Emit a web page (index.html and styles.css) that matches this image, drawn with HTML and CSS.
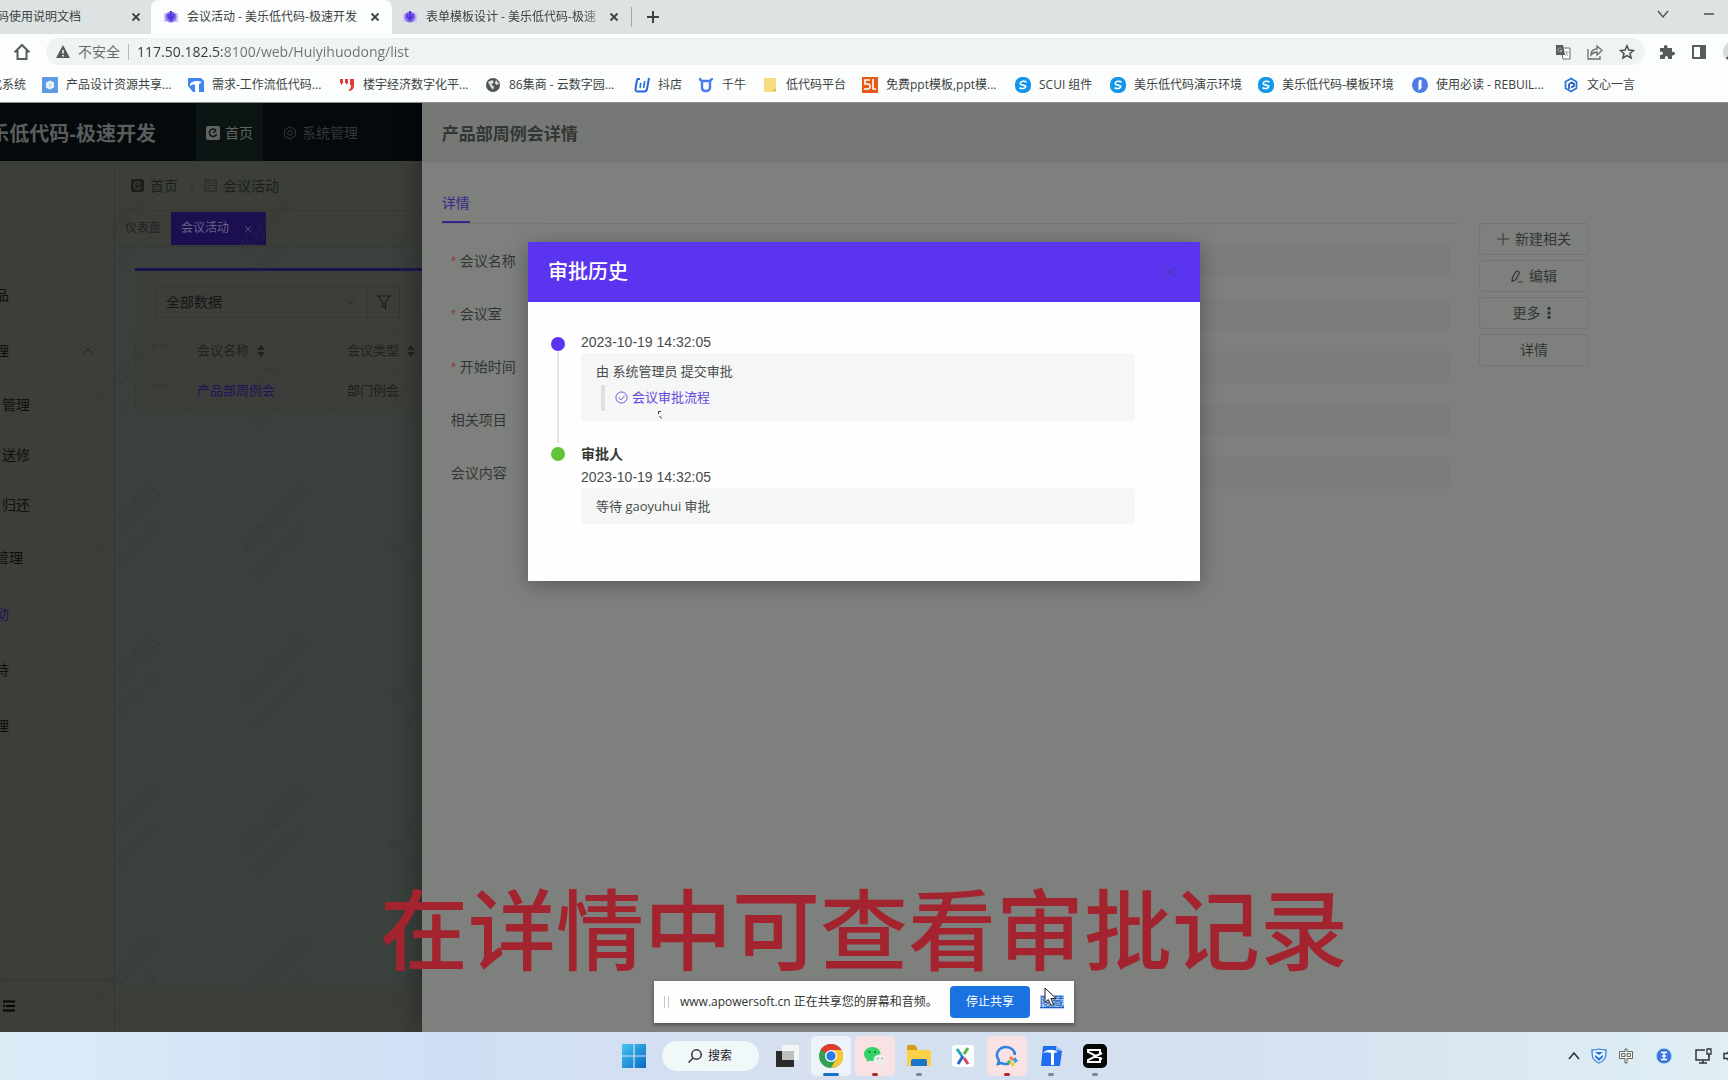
FILE: index.html
```html
<!DOCTYPE html>
<html lang="zh-CN">
<head>
<meta charset="utf-8">
<title>会议活动 - 美乐低代码-极速开发</title>
<link rel="stylesheet" href="styles.css">
</head>
<body>
<svg class="defs" aria-hidden="true">
  <defs>
    <symbol id="i-close" viewBox="0 0 10 10"><path d="M1.500 1.500l7 7M8.500 1.500l-7 7" fill="none" stroke="currentColor" stroke-width="1.800"/></symbol>
    <symbol id="i-bloom" viewBox="0 0 16 16"><path d="M1 4h3v9H1zM12 4h3v9h-3z" fill="#cdc5f8"/><circle cx="8" cy="8" r="5.500" fill="#8a70ee"/><path d="M8 2v8M5.500 5v3l2.500 3 2.500-3V5" stroke="#5635d8" stroke-width="2" fill="none"/></symbol>
    <symbol id="i-scui" viewBox="0 0 16 16"><rect width="16" height="16" rx="7" fill="#1296e8"/><path d="M11.500 5.200C9 3.200 5.500 4.500 5.200 6.500c0 2 5.600 1.200 5.600 3.200-.3 1.800-3.700 2.600-6.300 1" fill="none" stroke="#fff" stroke-width="1.600"/></symbol>
    <symbol id="i-dash" viewBox="0 0 14 14"><rect width="14" height="14" rx="2" fill="currentColor"/><path d="M10 4.500A3.700 3.700 0 1 0 10.600 8M7 7l3-2.500" fill="none" stroke="var(--hole)" stroke-width="1.500"/></symbol>
    <symbol id="i-sort" viewBox="0 0 10 12"><path d="M5 0l4 5H1zM5 12L1 7h8z" fill="currentColor"/></symbol>
  </defs>
</svg>

<header class="browser">
  <div class="tabs">
    <div class="tab tab-first"><span>低代码使用说明文档</span><button class="x" aria-label="关闭"><svg><use href="#i-close"/></svg></button></div>
    <div class="tab tab-on"><svg class="fav"><use href="#i-bloom"/></svg><span>会议活动 - 美乐低代码-极速开发</span><button class="x" aria-label="关闭"><svg><use href="#i-close"/></svg></button></div>
    <div class="tab tab-last"><svg class="fav"><use href="#i-bloom"/></svg><span class="fade">表单模板设计 - 美乐低代码-极速</span><button class="x" aria-label="关闭"><svg><use href="#i-close"/></svg></button></div>
    <button class="new" aria-label="新标签页"><svg viewBox="0 0 12 12"><path d="M6 0v12M0 6h12" stroke="#3c4443" stroke-width="2"/></svg></button>
    <div class="win">
      <svg width="12" height="12" viewBox="0 0 12 12"><path d="M1 3l5 6 5-6" fill="none" stroke="#4a504f" stroke-width="1.300"/></svg>
      <svg width="12" height="12" viewBox="0 0 12 12"><path d="M1 6h10" stroke="#333" stroke-width="1.300"/></svg>
    </div>
  </div>
  <div class="toolbar">
    <button class="tool" aria-label="主页"><svg width="16" height="18" viewBox="0 0 16 18"><path d="M1.500 8.500L8 2l6.500 6.500H12.500V16h-9V8.500z" fill="none" stroke="#555c5a" stroke-width="2"/></svg></button>
    <div class="omni">
      <svg width="14" height="14" viewBox="0 0 14 14"><path d="M7 0l7 13H0z" fill="#555c5a"/><path d="M7 5v3.500M7 10v1.500" stroke="#fff" stroke-width="1.500"/></svg>
      <span class="unsafe">不安全</span>
      <input class="url" aria-label="地址栏" value="117.50.182.5:8100/web/Huiyihuodong/list">
      <svg width="16" height="16" viewBox="0 0 16 16"><path d="M6 4h9v11H8z" fill="#fff" stroke="#666e6c"/><path d="M1 1h7l2 10H1z" fill="#555c5a"/><path d="M6.500 4.500a2 2 0 1 0 .5 2H5M10 8h4M12 7v1c0 2-1 3-2 4M11 9l2 3" fill="none" stroke="#aab0ae"/></svg>
      <svg width="16" height="16" viewBox="0 0 16 16"><path d="M1 5v10h12v-3" fill="none" stroke="#666e6c" stroke-width="1.300"/><path d="M4 11c0-4 2-6 6-6V2l5 4.500-5 4.500V8C7 8 5.500 9 4 11z" fill="none" stroke="#666e6c" stroke-width="1.300"/></svg>
      <svg width="16" height="16" viewBox="0 0 16 16"><path d="M8 1.800l1.900 4.300 4.600.4-3.500 3 1.100 4.500L8 11.600 3.900 14 5 9.500l-3.500-3 4.600-.4z" fill="none" stroke="#4a504f" stroke-width="1.500"/></svg>
    </div>
    <div class="ext">
      <svg width="16" height="16" viewBox="0 0 16 16"><path d="M1 4h4c-1-4 4-4 3.500 0H13v4c4-1 4 4 0 3.500V15H9c.5-4-3.500-4-3 0H1v-4c4 .5 4-4 0-3z" fill="#555c5a"/></svg>
      <svg width="14" height="14" viewBox="0 0 14 14"><path d="M1 1h12v12H1z" fill="none" stroke="#555c5a" stroke-width="2"/><path d="M8 1h5v12H8z" fill="#555c5a"/></svg>
      <svg width="22" height="22" viewBox="0 0 22 22"><circle cx="11" cy="11" r="11" fill="#d5dcda"/><circle cx="11" cy="8" r="4" fill="#444"/><path d="M3 18c2-6 14-6 16 0z" fill="#444"/></svg>
    </div>
  </div>
  <nav class="marks" aria-label="书签">
    <a href="#" class="cut"><span>化系统</span></a>
    <a href="#"><svg viewBox="0 0 16 16"><rect width="16" height="16" rx="1" fill="#5f9be0"/><path d="M8 3.500l4 2v5l-4 2-4-2v-5z" fill="#eaf3fc"/><circle cx="8" cy="8" r="1.500" fill="#b9d5f3"/></svg>产品设计资源共享...</a>
    <a href="#"><svg viewBox="0 0 16 16"><path d="M0 1h13l3 3v11H5L0 9z" fill="#3f86ee"/><path d="M2 7c2-3 7-4 12-2l-3 2v8H7V8C5 7 4 8 2 9z" fill="#fff"/></svg>需求-工作流低代码...</a>
    <a href="#"><svg viewBox="0 0 16 16"><path d="M1 2h3v4l-2 2V6H1zM6 2h3v4L7 8V6H6zM11 2h4v6c0 4-2 6-6 6 2-2 3-3 3-6h-1z" fill="#e0393b"/></svg>楼宇经济数字化平...</a>
    <a href="#"><svg viewBox="0 0 16 16"><circle cx="8" cy="8" r="7" fill="#4d5453"/><path d="M3 5l4-2 2 2-3 3 3 1-1 4-3-4zM11 3l3 4-3 1-1-2z" fill="#dfe4e2"/></svg>86集商 - 云数字园...</a>
    <a href="#"><svg viewBox="0 0 16 16"><path d="M6 2H4Q3 2 2.800 4L1.500 12Q1 14.500 4 14.500h6q2.500 0 3-2.500L15 1" fill="none" stroke="#2468e0" stroke-width="2"/><path d="M6 11l.8-5M9.500 11l1.300-7" stroke="#2468e0" stroke-width="1.600"/></svg>抖店</a>
    <a href="#"><svg viewBox="0 0 16 16"><path d="M2 1c0 3 2 3 3 3h6s3 0 3-3M4 4v7c0 4 8 4 8 0V4" fill="none" stroke="#4a7bec" stroke-width="2.400"/></svg>千牛</a>
    <a href="#"><svg viewBox="0 0 16 16"><path d="M2 1h12v13l-2 1H2z" fill="#f6dc80"/><path d="M11 12h3v2l-2 1z" fill="#e5bd4d"/></svg>低代码平台</a>
    <a href="#"><svg viewBox="0 0 16 16"><path d="M0 0h16v16H0z" fill="#e95a16"/><path d="M8 3H3v4h3q2 0 2 2.500T6 12H2M11 2v10h3" fill="none" stroke="#fff" stroke-width="1.600"/></svg>免费ppt模板,ppt模...</a>
    <a href="#"><svg><use href="#i-scui"/></svg>SCUI 组件</a>
    <a href="#"><svg><use href="#i-scui"/></svg>美乐低代码演示环境</a>
    <a href="#"><svg><use href="#i-scui"/></svg>美乐低代码-模板环境</a>
    <a href="#"><svg viewBox="0 0 16 16"><circle cx="8" cy="8" r="8" fill="#4d7ce8"/><path d="M7 13V5q0-2 2-2v8z" fill="#fff" stroke="#fff"/></svg>使用必读 - REBUIL...</a>
    <a href="#"><svg viewBox="0 0 16 16"><path d="M8 1.500l5.500 3.200v6.600L8 14.500l-5.500-3.200V4.700z" fill="none" stroke="#2a79dd" stroke-width="1.800"/><path d="M6 12V7.500L8.500 5.500 11 7v2L8 10.500" fill="none" stroke="#174cae" stroke-width="1.600"/></svg>文心一言</a>
  </nav>
</header>

<main class="page">
  <div class="app">
    <div class="topbar">
      <strong class="brand">美乐低代码-极速开发</strong>
      <a href="#" class="top top-on"><svg><use href="#i-dash"/></svg>首页</a>
      <a href="#" class="top"><svg viewBox="0 0 14 14"><path d="M7 .8l5.400 3.100v6.200L7 13.200l-5.400-3.100V3.900z" fill="none" stroke="currentColor"/><circle cx="7" cy="7" r="2.300" fill="none" stroke="currentColor"/></svg>系统管理</a>
    </div>
    <div class="cols">
      <aside class="side">
        <ul>
          <li><a href="#">产品</a></li>
          <li class="open"><a href="#">管理</a><svg width="10" height="6" viewBox="0 0 10 6"><path d="M1 5l4-4 4 4" fill="none" stroke="#141614"/></svg></li>
          <li class="sub"><a href="#">管理</a></li>
          <li class="sub"><a href="#">送修</a></li>
          <li class="sub"><a href="#">归还</a></li>
          <li class="mid"><a href="#">管理</a></li>
          <li class="cur"><a href="#">活动</a></li>
          <li><a href="#">接待</a></li>
          <li><a href="#">管理</a></li>
        </ul>
        <button class="fold" aria-label="折叠菜单"><svg width="12" height="12" viewBox="0 0 12 12"><path d="M0 1.500h12M3 6h9M0 10.500h12M0 6h2" stroke="#050605" stroke-width="2"/></svg></button>
      </aside>
      <section class="work">
        <div class="crumbs"><svg width="13" height="13"><use href="#i-dash"/></svg><a href="#">首页</a><svg class="sep" width="6" height="10" viewBox="0 0 6 10"><path d="M1 1l4 4-4 4" fill="none" stroke="#2a2c2a"/></svg><svg width="13" height="13" viewBox="0 0 14 14"><path d="M1 1h12v12H1zM3.500 4h4M3.500 7h7M3.500 10h3M10 3v2" fill="none" stroke="#242624"/></svg><a href="#">会议活动</a></div>
        <div class="views"><a href="#" class="view">仪表盘</a><a href="#" class="view view-on">会议活动<svg width="8" height="8" viewBox="0 0 10 10"><path d="M1 1l8 8M9 1l-8 8" stroke="currentColor" fill="none"/></svg></a></div>
        <div class="panel">
          <div class="filter">
            <label class="pick"><select aria-label="数据范围"><option>全部数据</option></select><svg width="10" height="6" viewBox="0 0 10 6"><path d="M1 1l4 4 4-4" fill="none" stroke="#252825"/></svg></label>
            <button class="funnel" aria-label="筛选"><svg width="14" height="14" viewBox="0 0 14 14"><path d="M1 1h12L8.500 7v6L5.500 11.500V7z" fill="none" stroke="#191b19" stroke-width="1.200"/></svg></button>
            <input class="search" aria-label="搜索">
          </div>
          <table>
            <thead><tr><th class="c1"><input type="checkbox" aria-label="全选"></th><th class="c2">会议名称<svg><use href="#i-sort"/></svg></th><th>会议类型<svg><use href="#i-sort"/></svg></th></tr></thead>
            <tbody><tr><td class="c1"><input type="checkbox" aria-label="选择"></td><td class="c2"><a href="#">产品部周例会</a></td><td>部门例会</td></tr></tbody>
          </table>
        </div>
      </section>
      <svg class="mark" aria-hidden="true"><defs><pattern id="wm" width="149" height="150" patternUnits="userSpaceOnUse" patternTransform="translate(58 -14)"><g transform="rotate(-45 75 75)"><text x="26" y="74" font-size="18">系统管理员</text><text x="16" y="98" font-size="14">2023-10-19</text></g></pattern></defs><rect width="100%" height="100%" fill="url(#wm)"/></svg>
    </div>
  </div>

  <section class="drawer">
    <h2>产品部周例会详情</h2>
    <div class="detail">
      <div class="info">
        <div class="dtabs"><a href="#">详情</a></div>
        <form>
          <label for="f1"><i>*</i>会议名称</label><input id="f1" disabled>
          <label for="f2"><i>*</i>会议室</label><input id="f2" disabled>
          <label for="f3"><i>*</i>开始时间</label><input id="f3" disabled>
          <label for="f4">相关项目</label><input id="f4" disabled>
          <label for="f5">会议内容</label><input id="f5" disabled>
        </form>
      </div>
      <div class="acts">
        <button><svg width="12" height="12" viewBox="0 0 12 12"><path d="M6 0v12M0 6h12" stroke="currentColor"/></svg>新建相关</button>
        <button><svg width="12" height="13" viewBox="0 0 12 13"><path d="M1 11.500l.5-4L5 1.500q2-1 3.500 1L5 9.500z M6.500 12H12" fill="none" stroke="currentColor" stroke-width="1.200"/></svg>编辑</button>
        <button class="more">更多<svg width="4" height="12" viewBox="0 0 4 12"><path d="M.5 0h3v3h-3zM.5 4.500h3v3h-3zM.5 9h3v3h-3z" fill="currentColor"/></svg></button>
        <button>详情</button>
      </div>
    </div>
  </section>

  <section class="modal" role="dialog" aria-labelledby="mt">
    <header><h3 id="mt">审批历史</h3><button aria-label="关闭"><svg width="12" height="12" viewBox="0 0 12 12"><path d="M1 1l10 10M11 1L1 11" stroke="#4a3cc0" stroke-width="1.500"/></svg></button></header>
    <ol>
      <li>
        <time>2023-10-19 14:32:05</time>
        <div class="card">
          <p>由 系统管理员 提交审批</p>
          <blockquote><a href="#"><svg width="13" height="13" viewBox="0 0 14 14"><circle cx="7" cy="7" r="6" fill="none" stroke="currentColor"/><path d="M4 7l2.500 2.500L10.500 5" fill="none" stroke="currentColor"/></svg>会议审批流程</a></blockquote>
          <svg class="hint" width="5" height="8" viewBox="0 0 5 8"><path d="M4 .5H1.500V3M2.500 5l2 2.500" fill="none" stroke="#333"/></svg>
        </div>
      </li>
      <li class="wait">
        <strong>审批人</strong>
        <time>2023-10-19 14:32:05</time>
        <div class="card"><p>等待 gaoyuhui 审批</p></div>
      </li>
    </ol>
  </section>

  <p class="caption">在详情中可查看审批记录</p>

  <div class="share">
    <span class="grip"></span>
    <span class="msg">www.apowersoft.cn 正在共享您的屏幕和音频。</span>
    <button>停止共享</button>
    <a href="#">隐藏</a>
    <svg class="cursor" width="14" height="20" viewBox="0 0 14 20"><path d="M1 1v14.500l3.300-3 2.700 6 2.500-1-2.600-6H12z" fill="#fff" stroke="#222"/></svg>
  </div>
</main>

<footer class="taskbar">
  <div class="dock">
    <button class="task" aria-label="开始"><svg width="24" height="24" viewBox="0 0 24 24"><defs><linearGradient id="win" x2="1" y2="1"><stop stop-color="#45c5f2"/><stop offset="1" stop-color="#0869c4"/></linearGradient></defs><path d="M0 0h11.400v11.400H0zM12.600 0H24v11.400H12.600zM0 12.600h11.400V24H0zM12.600 12.600H24V24H12.600z" fill="url(#win)"/></svg></button>
    <button class="seek"><svg width="14" height="14" viewBox="0 0 14 14"><circle cx="8.500" cy="5.500" r="4.700" fill="none" stroke="#333" stroke-width="1.500"/><path d="M5 9l-4.500 4.500" stroke="#333" stroke-width="1.500"/></svg>搜索</button>
    <button class="task" aria-label="任务视图"><svg width="24" height="24" viewBox="0 0 24 24"><path d="M7 1h17v15H7z" fill="#f4f6f6"/><path d="M1 7h18v16H1z" fill="#2b2b2b"/><path d="M7 7h12v9H7z" fill="#bfc1c0"/></svg></button>
    <button class="task lit run" aria-label="Chrome"><svg width="24" height="24" viewBox="0 0 24 24"><circle cx="12" cy="12" r="12" fill="#34a152"/><path d="M12 12L1.600 6A12 12 0 0 1 22.400 6z" fill="#e03a2f"/><path d="M12 6h10.400A12 12 0 0 1 12 24l5.200-9z" fill="#fbc62d"/><circle cx="12" cy="12" r="6" fill="#fff"/><circle cx="12" cy="12" r="4.700" fill="#2f79e8"/></svg></button>
    <button class="task hot dot" aria-label="微信"><svg width="24" height="24" viewBox="0 0 24 24"><path d="M9.500 3C4.500 3 1 6 1 10c0 2.300 1.200 4 3 5.300L3.500 18l3-1.500c5 1.500 11-1 11-6.500 0-4-3.500-7-8-7z" fill="#33d365"/><circle cx="6.500" cy="8" r="1" fill="#17672f"/><circle cx="12" cy="8" r="1" fill="#17672f"/><path d="M17 10.500c-4 0-6.500 2.300-6.500 5.300 0 4 4.500 6 8.500 4.800l2.500 1-.5-2c4-3.500 1-9.100-4-9.100z" fill="#eceeed"/><circle cx="15" cy="14.500" r=".8" fill="#888"/><circle cx="19" cy="14.500" r=".8" fill="#888"/></svg></button>
    <button class="task dot" aria-label="文件资源管理器"><svg width="24" height="24" viewBox="0 0 24 24"><path d="M0 3q0-2 2-2h6l2 3v4H0z" fill="#d99a15"/><path d="M0 6h22q2 0 2 2v14H0z" fill="#fbcf47"/><path d="M4 22v-5q0-2 2-2h12q2 0 2 2v5z" fill="#1b74c8"/></svg></button>
    <button class="task" aria-label="X"><svg width="24" height="24" viewBox="0 0 24 24"><rect x="1" y="1" width="22" height="22" rx="3" fill="#fdfefe"/><path d="M6 5l5 7" stroke="#22a7b8" stroke-width="3"/><path d="M13 14l4 6" stroke="#d9455f" stroke-width="3"/><path d="M17 4l-4 6" stroke="#54b948" stroke-width="3"/><path d="M12 12l-5 8" stroke="#2b63c9" stroke-width="3"/></svg></button>
    <button class="task hot dot" aria-label="企业微信"><svg width="24" height="24" viewBox="0 0 24 24"><path d="M14 19.500c-3 1-5.500.5-7.500-.5L3 20l1-3.500C-1 10 4 3 11 3c5 0 9 3.500 9 8" fill="none" stroke="#2b82e2" stroke-width="2.500"/><path d="M16 12l3 3-2 2-3-3z" fill="#f07c32"/><path d="M20 13l3 4-3 2-2-3z" fill="#2f9be8"/><path d="M17 18l3 1-2 4-3-3z" fill="#f9c531"/><path d="M13 16l3 1-1 3-3-1z" fill="#51bd52"/></svg></button>
    <button class="task dot" aria-label="T"><svg width="24" height="24" viewBox="0 0 24 24"><path d="M4 2h13l6 5-2 15H2z" fill="#1f6df0"/><path d="M17 2l6 5-6-1z" fill="#8bc2ff"/><path d="M4 9c4-4 10-4 15-1l-4 1v12h-3V9c-3-1-5-1-8 0z" fill="#fff"/></svg></button>
    <button class="task dot" aria-label="剪映"><svg width="24" height="24" viewBox="0 0 24 24"><rect width="24" height="24" rx="5" fill="#060606"/><path d="M19 9L5 16v2h12v-3M19 15L5 8V6h12v3" fill="none" stroke="#fff" stroke-width="2"/></svg></button>
  </div>
  <div class="tray">
    <svg width="12" height="16" viewBox="0 0 12 16"><path d="M1 11l5-6 5 6" fill="none" stroke="#333" stroke-width="1.600"/></svg>
    <svg width="16" height="16" viewBox="0 0 16 16"><path d="M8 1c3 1 5 1 7 1 0 6 0 10-7 13C1 12 1 8 1 2c2 0 4 0 7-1z" fill="#e6f2fd" stroke="#3a82dd" stroke-width="1.300"/><path d="M4 4h8L8 7zM4 7l4 3 4-3v2l-4 4-4-4z" fill="#2671d8"/></svg>
    <svg width="16" height="16" viewBox="0 0 16 16"><path d="M1.500 3.500H7V1h2v2.500h5.500v7H9V15H7v-4.500H1.500zM3.500 5.500v3H7v-3zM9 5.500v3h3.500v-3z" fill="#f8faf8" stroke="#66645c"/></svg>
    <svg class="blue" width="16" height="16" viewBox="0 0 16 16"><circle cx="8" cy="8" r="7.500" fill="#3f78e0"/><path d="M5 4.500h6M5 11.500h6M8 4.500v7M6 8h4" stroke="#fff" stroke-width="1.300"/></svg>
    <svg width="18" height="18" viewBox="0 0 18 18"><path d="M11 3H2v10h13V8M5 16h8M9 13v3" fill="none" stroke="#333" stroke-width="1.500"/><path d="M13 2h4v5h-4zM15 7v3" fill="none" stroke="#333" stroke-width="1.300"/></svg>
    <svg width="14" height="18" viewBox="0 0 14 18"><path d="M1 6.500h3L8 2v14l-4-4.500H1z" fill="none" stroke="#333" stroke-width="1.500"/></svg>
  </div>
</footer>
</body>
</html>
```

FILE: styles.css
```css
* { box-sizing: border-box; }
body {
  margin: 0;
  min-height: 100vh;
  display: flex;
  flex-direction: column;
  overflow-x: hidden;
  font: 14px/20px "Liberation Sans", "Noto Sans CJK SC", sans-serif;
  color: #303331;
}
h2, h3, p, ul, ol, blockquote { margin: 0; padding: 0; list-style: none; }
a { color: inherit; text-decoration: none; }
button { border: 0; background: none; padding: 0; font: inherit; color: inherit; }
input, select { font: inherit; color: inherit; }
svg { display: block; flex: none; }
.defs { width: 0; height: 0; position: absolute; }

/* Browser window */
.browser { background: #fcfefd; border-bottom: 1px solid #8f9190; font-family: "Open Sans", "Noto Sans CJK SC", sans-serif; height: 103px; }
.tabs { display: flex; height: 34px; background: #dce3e2; font-size: 12px; overflow: hidden; }
.tab { display: flex; align-items: center; white-space: nowrap; color: #3b4241; }
.tab span { flex: 1; overflow: hidden; }
.tab-first { width: 151px; padding-right: 10px; }
.tab-first span { display: flex; justify-content: flex-end; margin-right: 50px; }
.tab-on { width: 241px; padding: 0 12px; background: #fcfefd; border-radius: 8px 8px 0 0; }
.tab-last { width: 239px; padding: 0 12px 0 10px; }
.fade { -webkit-mask-image: linear-gradient(90deg, #000 85%, transparent); mask-image: linear-gradient(90deg, #000 85%, transparent); }
.fav { width: 16px; height: 16px; margin-right: 8px; }
.x svg { width: 10px; height: 10px; color: #3c4443; }
.new { width: 42px; height: 20px; margin-top: 7px; border-left: 1px solid #a3aaa9; display: grid; place-items: center; }
.new svg { width: 12px; }
.win { margin-left: auto; display: flex; gap: 34px; padding: 8px 13px; }
.toolbar { display: flex; align-items: center; height: 35px; overflow: hidden; }
.tool { width: 46px; padding-right: 2px; display: grid; place-items: center; flex: none; }
.omni { flex: 1; display: flex; align-items: center; gap: 16px; height: 27px; padding: 0 10px; background: #eff3f1; border-radius: 14px; }
.unsafe { color: #666e6c; border-right: 1px solid #b5bbb9; padding-right: 8px; margin: 0 -8px; line-height: 16px; }
.url { flex: 1; min-width: 0; border: 0; padding: 0; height: 24px; color: transparent; background: linear-gradient(90deg, #333a38 85px, #6b7371 85px); -webkit-background-clip: text; background-clip: text; }
.ext { display: flex; align-items: center; gap: 17px; width: 83px; padding-left: 14px; }
.marks { display: grid; grid-template-columns: 42px 146px 151px 146px 149px 64px 64px 100px 153px 95px 148px 154px 151px auto; align-items: center; height: 32px; font-size: 12px; color: #3b4241; overflow: hidden; }
.marks a { display: flex; align-items: center; gap: 8px; white-space: nowrap; }
.marks svg { width: 16px; height: 16px; }
.marks .cut { justify-content: flex-end; padding-right: 16px; overflow: hidden; }

/* Application under the mask */
.page { position: relative; flex: 1; display: flex; overflow: hidden; background: #3a403b; }
.app { flex: 1; display: flex; flex-direction: column; }
.topbar { display: flex; height: 58px; background: #04090c; color: #323837; }
.brand { width: 156px; margin-right: 40px; padding-top: 4px; display: flex; justify-content: flex-end; align-items: center; overflow: hidden; white-space: nowrap; font-size: 20px; color: #595e5d; }
.top { display: flex; align-items: center; gap: 5px; padding: 2px 10px 0; margin-right: 10px; --hole: #0b1313; }
.top svg { width: 14px; height: 14px; }
.top-on { background: #0b1313; color: #5f6462; }
.cols { position: relative; flex: 1; display: flex; }
.side { width: 115px; flex: none; display: flex; flex-direction: column; background: #3c3e3a; border-right: 1px solid #343834; color: #0d0f0d; }
.side ul { flex: 1; padding-top: 106px; overflow: hidden; }
.side li { display: flex; justify-content: flex-end; align-items: center; height: 56px; padding-right: 105px; white-space: nowrap; }
.side li.open { padding-right: 21px; gap: 74px; }
.side li.sub { height: 50px; padding-right: 84px; }
.side li.sub:nth-child(3) { height: 51px; }
.side li.mid { padding-right: 91px; }
.side li.cur { color: #1d145c; }
.fold { height: 53px; padding-left: 3px; border-top: 1px solid #343733; display: flex; align-items: center; }
.work { flex: 1; display: flex; flex-direction: column; min-width: 0; background: linear-gradient(#3a403b, #3a403b) no-repeat 0 0 / 100% calc(100% - 42px) #3c3e3a; }
.crumbs { display: flex; align-items: center; gap: 6px; height: 50px; padding: 0 16px; background: #3c3e3a; color: #1b1e1b; border-bottom: 1px solid #363834; --hole: #3c3e3a; }
.crumbs .sep { margin: 0 4px; }
.views { display: flex; align-items: center; height: 36px; background: #3c3e3a; font-size: 12px; border-bottom: 1px solid #343834; }
.view { padding: 0 10px; color: #1f221f; line-height: 33px; }
.view-on { display: flex; align-items: center; gap: 15px; padding-right: 14px; background: #1b0f50; color: #686188; }
.panel { margin: 21px 20px 42px; background: #3c3e3a; border-top: 3px solid #1c1252; }
.filter { display: flex; padding: 15px 20px 12px; }
.pick { display: flex; width: 213px; height: 32px; border: 1px solid #343733; align-items: center; padding-right: 12px; color: #151715; }
.pick select { flex: 1; border: 0; background: none; appearance: none; padding: 0 10px; }
.funnel { width: 32px; border: 1px solid #343733; border-left: 0; display: grid; place-items: center; margin-right: 16px; }
.search { width: 200px; border: 1px solid #343733; background: none; }
table { width: 100%; border-collapse: collapse; font-size: 13px; color: #1c1f1c; background: #3c3e3a; }
th, td { height: 40px; padding: 0 12px; text-align: left; font-weight: 400; border: 1px solid #383b37; }
th { color: #202320; }
th svg { display: inline-block; width: 10px; height: 12px; margin-left: 7px; vertical-align: -2px; }
.c1 { width: 49px; text-align: center; }
.c2 { width: 150px; }
td a { color: #1d145c; }
table input { appearance: none; display: block; margin: auto; width: 14px; height: 14px; border: 1px solid #343733; border-radius: 2px; }
.mark { position: absolute; inset: 0; width: 100%; height: 100%; fill: #303531; opacity: .32; pointer-events: none; }

/* Detail drawer */
.drawer { position: absolute; top: 0; right: 0; bottom: 0; width: 75.6%; background: #7e807d; box-shadow: -4px 0 24px rgba(0, 0, 0, .3); color: #323633; }
.drawer h2 { height: 59px; padding: 0 20px; background: #767875; border-bottom: 1px solid #727471; font-size: 17px; line-height: 64px; }
.detail { display: flex; justify-content: space-between; padding: 30px 139px 0 20px; }
.info { flex: 1; margin-right: 21px; }
.dtabs { display: flex; border-bottom: 1px solid #757774; }
.dtabs a { height: 31px; line-height: 22px; color: #36298a; border-bottom: 2px solid #36298a; }
.info form { display: grid; grid-template-columns: 98px 1fr; row-gap: 21px; padding: 21px 8px 0 9px; }
.info label { line-height: 32px; }
.info i { display: inline-block; width: 9px; color: #8a3c3a; font-style: normal; }
.info input { width: 100%; height: 32px; border: 0; background: #7b7d7a; border-radius: 4px; }
.acts { display: flex; flex-direction: column; gap: 5px; width: 110px; padding-top: 31px; }
.acts button { display: flex; align-items: center; justify-content: center; gap: 6px; height: 32px; border: 1px solid #737572; border-radius: 3px; }
.acts .more { padding-right: 5px; }

/* Approval history dialog */
.modal { position: absolute; top: 139px; left: 50%; width: 672px; transform: translateX(-50%); background: #fdfefd; box-shadow: 0 4px 20px rgba(0, 0, 0, .3); color: #484c4a; }
.modal header { display: flex; justify-content: space-between; align-items: center; height: 60px; padding: 0 24px 0 20px; background: #5b34f0; color: #fff; }
.modal h3 { font-size: 20px; font-weight: 500; line-height: 28px; }
.modal ol { padding: 30px 65px 57px 23px; }
.modal li { position: relative; padding: 0 0 22px 30px; }
.modal li:last-child { padding-bottom: 0; }
.modal li::before { content: ""; position: absolute; left: 0; top: 5px; width: 14px; height: 14px; border-radius: 50%; background: #5b34f0; }
.modal li::after { content: ""; position: absolute; left: 6px; top: 19px; bottom: 0; width: 2px; background: #e4e7e6; }
.modal .wait::before { top: 4px; background: #62c339; }
.modal .wait::after { display: none; }
.modal strong, .modal time { display: block; }
.modal strong { line-height: 22px; padding-bottom: 2px; color: #333735; }
.modal time { line-height: 21px; }
.card { position: relative; background: #f5f6f6; border-radius: 4px; padding: 8px 15px; font: 13px/20px "Open Sans", "Noto Sans CJK SC", sans-serif; }
.card blockquote { margin: 4px 0 2px 5px; border-left: 4px solid #dfe1e0; padding: 2px 0 4px 10px; }
.card blockquote a { display: flex; align-items: center; gap: 4px; color: #6548e0; }
.hint { position: absolute; left: 76px; bottom: 2px; }

/* Caption and screen sharing bar */
.caption { position: absolute; left: 0; right: 0; bottom: 42px; text-align: center; white-space: nowrap; font: 500 88px/130px "Noto Sans CJK SC", sans-serif; color: #a3242f; }
.share { position: absolute; left: 50%; bottom: 9px; transform: translateX(-50%); display: flex; align-items: center; width: 420px; height: 42px; padding: 0 10px; background: #fdfefd; box-shadow: 0 2px 4px rgba(0, 0, 0, .4); font: 12px/20px "Open Sans", "Noto Sans CJK SC", sans-serif; white-space: nowrap; }
.grip { width: 5px; height: 12px; border: solid #c3c7c5; border-width: 0 1px; margin-right: 11px; }
.msg { flex: 1; }
.share button { width: 80px; height: 32px; margin-right: 10px; border-radius: 4px; background: #1a73e0; color: #fff; }
.share a { background: #b4d2f6; color: #1a5fc0; line-height: 14px; text-decoration: underline; }
.cursor { position: absolute; right: 16px; top: 6px; }

/* Taskbar */
.taskbar { display: grid; grid-template-columns: 1fr auto 1fr; height: 48px; background: linear-gradient(90deg, #dcecf7, #cfdff5 25%, #d6e0ef 45%, #d3e0f0 70%, #dfeff4); }
.dock { grid-column: 2; display: flex; align-items: center; gap: 4px; }
.task { position: relative; width: 40px; height: 40px; display: grid; place-items: center; border-radius: 5px; }
.lit { background: #eef3fa; }
.hot { background: #f9e2e4; }
.dot::after, .run::after { content: ""; position: absolute; left: 17px; bottom: 0; width: 6px; height: 3px; border-radius: 2px; background: #7d8590; }
.hot::after { background: #b32929; }
.run::after { left: 12px; width: 16px; background: #1272c8; }
.seek { display: flex; align-items: center; justify-content: center; gap: 6px; width: 97px; height: 30px; margin: 0 4px; border-radius: 15px; background: #f0f8fa; font-size: 12px; color: #222; }
.tray { grid-column: 3; display: flex; align-items: center; justify-content: flex-end; gap: 11px; overflow: hidden; }
.blue { margin: 0 11px; }
.tray > :last-child { margin-right: -9px; }
```
